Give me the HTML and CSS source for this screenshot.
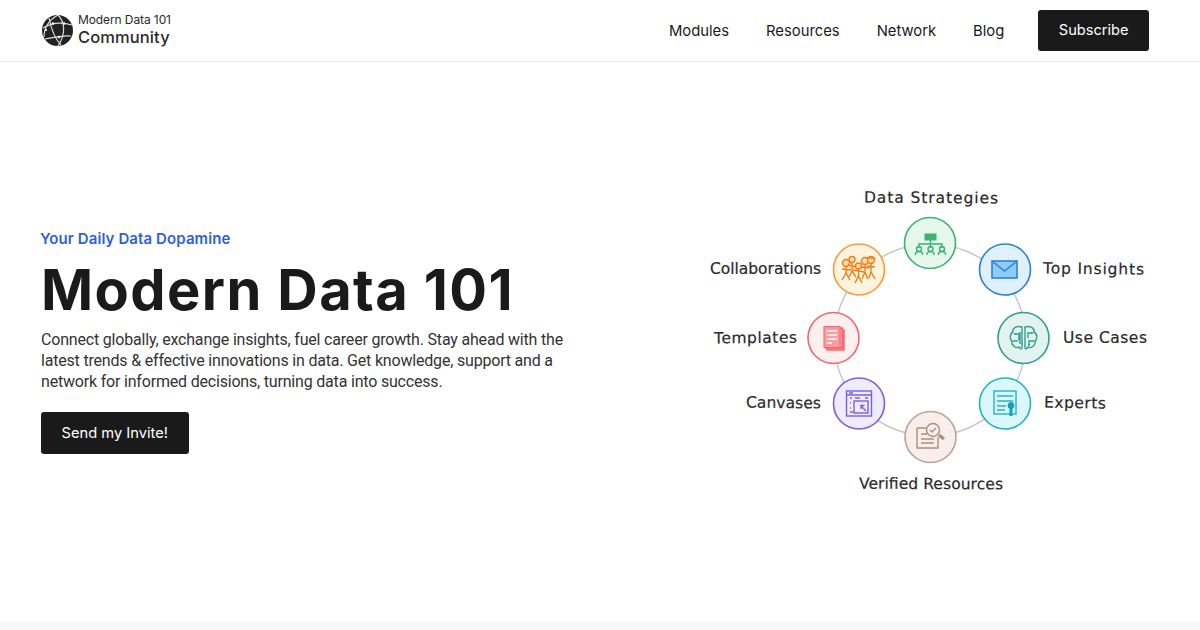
FILE: index.html
```html
<!doctype html>
<html>
<head>
    <meta charset="utf-8">
    <title>Modern Data 101 Community</title>
    <link rel="stylesheet" href="styles.css">
</head>
<body>
    <div class="container">
        <header>
            <a class="logo" href="#">
                <svg class="globe" width="33" height="33" viewBox="0 0 33 33">
                    <circle cx="16.5" cy="16.5" r="15.5" fill="#222"/>
                    <g fill="none" stroke="#ddd" stroke-width="1.2">
                        <path d="M17 1 C8 6 3 13 3 23"/>
                        <path d="M17 1 C24 8 25 20 17 32"/>
                        <path d="M2 14 C10 9 21 8 31 11"/>
                        <path d="M4 25 C12 24 21 21 30 22"/>
                        <path d="M8 4 C10 14 13 24 20 31"/>
                    </g>
                    <g fill="#fff">
                        <circle cx="12" cy="9.5" r="1.3"/>
                        <circle cx="23" cy="9.5" r="1.3"/>
                        <circle cx="18" cy="23" r="1.3"/>
                        <circle cx="5" cy="16" r="1.1"/>
                    </g>
                </svg>
                <span class="logo_text">
                    <span class="logo_top">Modern Data 101</span>
                    <span class="logo_name">Community</span>
                </span>
            </a>
            <nav>
                <a href="#">Modules</a>
                <a href="#">Resources</a>
                <a href="#">Network</a>
                <a href="#">Blog</a>
                <a class="btn" href="#">Subscribe</a>
            </nav>
        </header>
        <section class="hero">
            <div class="intro">
                <div class="kicker">Your Daily Data Dopamine</div>
                <h1>Modern Data 101</h1>
                <p>Connect globally, exchange insights, fuel career growth. Stay ahead with the latest trends &amp; effective innovations in data. Get knowledge, support and a network for informed decisions, turning data into success.</p>
                <a class="btn" href="#">Send my Invite!</a>
            </div>
            <svg class="wheel" width="460" height="320" viewBox="700 180 460 320">
                <circle class="ring" cx="930" cy="340" r="96"/>

                <g class="node green">
                    <circle cx="930" cy="243" r="25.5"/>
                    <rect class="solid" x="925" y="234" width="11" height="6"/>
                    <path d="M930.5 240 V244 M919 248 V244 H942 V248 M930.5 244 V248"/>
                    <circle class="head" cx="919" cy="249" r="2.500"/>
                    <circle class="head" cx="930.500" cy="249" r="2.500"/>
                    <circle class="head" cx="942" cy="249" r="2.500"/>
                    <path d="M915.500 255 V253 Q919 250 922.500 253 V255 M927 255 V253 Q930.500 250 934 253 V255 M938.500 255 V253 Q942 250 945.500 253 V255"/>
                </g>
                <g class="node blue">
                    <circle cx="1005" cy="269.500" r="25.500"/>
                    <rect class="solid" x="992" y="261" width="25" height="17"/>
                    <path d="M992 261 L1004.500 271 L1017 261"/>
                </g>
                <g class="node teal">
                    <circle cx="1023.500" cy="338" r="25.500"/>
                    <path d="M1022 327 C1016 325 1012 329 1013 332 C1009 334 1010 340 1012 341 C1011 345 1016 349 1019 347 Q1021 350 1022 348 Z"/>
                    <path d="M1025 327 C1031 325 1035 329 1034 332 C1038 334 1037 340 1035 341 C1036 345 1031 349 1028 347 Q1026 350 1025 348 Z"/>
                    <path d="M1015 334 H1019 V339 M1013 341 H1018 M1032 333 H1028 V338 M1034 341 H1029 V345 M1020 332 V344"/>
                    <circle class="dot" cx="1015" cy="334" r="1"/>
                    <circle class="dot" cx="1019" cy="339" r="1"/>
                    <circle class="dot" cx="1032" cy="333" r="1"/>
                    <circle class="dot" cx="1029" cy="345" r="1"/>
                </g>
                <g class="node cyan">
                    <circle cx="1005" cy="403.500" r="25.500"/>
                    <rect x="994" y="391" width="22" height="23"/>
                    <path d="M997 396 H1013 M997 401 H1013 M997 406 H1006 M997 410 H1005"/>
                    <circle class="solid" cx="1011" cy="405.500" r="3"/>
                    <path class="thick" d="M1011 408 V416"/>
                </g>
                <g class="node brown">
                    <circle cx="930.500" cy="437" r="25.500"/>
                    <path d="M917 428 H927 M938 437 V448 H917 V428"/>
                    <path d="M921 434 H927 M921 439 H934 M921 443 H934"/>
                    <circle class="lens" cx="933" cy="430" r="6.500"/>
                    <path d="M930 430 L932 432 L936 428"/>
                    <path class="thick" d="M939 435 L944 439"/>
                </g>
                <g class="node purple">
                    <circle cx="859" cy="403.500" r="25.500"/>
                    <rect x="846.500" y="391" width="25" height="25"/>
                    <path d="M846.500 395 H871.500 M849 393 H853 M850 398 H852 M855 398 H860 M865 398 H868 M850 403 H851 M850 408 H851 M850 412 H853"/>
                    <rect x="854" y="401" width="14" height="12"/>
                    <path d="M866 411 L861 406 M861 409 V405.500 H864.500"/>
                </g>
                <g class="node red">
                    <circle cx="833.500" cy="338" r="25.500"/>
                    <rect class="back" x="827" y="330" width="17" height="20"/>
                    <rect class="back" x="825.500" y="328" width="17" height="20"/>
                    <rect class="solid" x="824" y="326.500" width="16" height="21"/>
                    <path d="M827 331 H837 M827 335 H837 M827 339 H837 M827 343 H832"/>
                </g>
                <g class="node orange">
                    <circle cx="859" cy="269.500" r="25.500"/>
                    <g class="person">
                        <circle cx="846" cy="263" r="3.500"/><path d="M846 266.500 V273 M842 269 L851 270 M846 273 L842 280 M846 273 L850 280"/>
                    </g>
                    <g class="person">
                        <circle cx="852" cy="259.500" r="3"/><path d="M852 262.500 V271 M848 265 L856 267 M852 271 L849 277 M852 271 L856 277"/>
                    </g>
                    <g class="person">
                        <circle cx="858.500" cy="266" r="3"/><path d="M858.500 269 V276 M853 270 L864 272 M858.500 276 L855 283 M858.500 276 L862 283"/>
                    </g>
                    <g class="person">
                        <circle cx="865" cy="261" r="3.500"/><path d="M865 264.500 V272 M861 267 L870 268 M865 272 L862 279 M865 272 L868 279"/>
                    </g>
                    <g class="person">
                        <circle cx="871" cy="260" r="3.500"/><path d="M867 258 H875 M871 263.500 V272 M867 266 L875 267 M871 272 L869 278 M871 272 L875 279"/>
                    </g>
                </g>

                <g class="labels">
                    <text x="864" y="203" textLength="134" transform="rotate(.4 930 198)">Data Strategies</text>
                    <text x="1043" y="274" textLength="101" transform="rotate(.6 1090 270)">Top Insights</text>
                    <text x="1063" y="343" textLength="84">Use Cases</text>
                    <text x="1044" y="408" textLength="62" transform="rotate(1 1075 403)">Experts</text>
                    <text x="859" y="489" textLength="144" transform="rotate(.3 930 484)">Verified Resources</text>
                    <text x="746" y="408" textLength="75" transform="rotate(.6 783 403)">Canvases</text>
                    <text x="714" y="343" textLength="83" transform="rotate(-.6 755 338)">Templates</text>
                    <text x="710" y="274" textLength="111">Collaborations</text>
                </g>
            </svg>
        </section>
        <footer></footer>
    </div>
</body>
</html>
```

FILE: styles.css
```css
body{
    margin:0;
    color:#1a1a1a;
    background-color:#fff;
    font-family:"Roboto", sans-serif;
}
a{
    color:inherit;
    text-decoration:none;
}
.container{
    display:flex;
    flex-direction:column;
    height:630px;
    overflow:hidden;
}
header{
    display:flex;
    align-items:center;
    justify-content:space-between;
    height:61px;
    flex-shrink:0;
    padding:0 51px 0 41px;
    border-bottom:1px solid #e8e8e8;
}
.logo{
    display:flex;
    align-items:center;
    gap:4px;
}
.logo_text{
    display:flex;
    flex-direction:column;
    margin-top:-1px;
    font-family:"Inter", sans-serif;
    color:#2a2a2a;
}
.logo_top{
    font-size:12px;
    line-height:14.500px;
    letter-spacing:-0.1px;
}
.logo_name{
    font-size:16.500px;
    line-height:20px;
    font-weight:500;
    letter-spacing:0.100px;
}
nav{
    display:flex;
    align-items:center;
    gap:37px;
    font-family:"Inter", sans-serif;
    font-size:14.800px;
    font-weight:400;
}
.btn{
    display:inline-block;
    padding:0 20.500px;
    line-height:42px;
    font-family:"Inter", sans-serif;
    font-size:14.700px;
    font-weight:400;
    color:#fff;
    background-color:#1a1a1a;
    border-radius:3px;
}
nav .btn{
    margin-left:-3px;
    line-height:41px;
    font-size:14.600px;
}
.hero{
    display:flex;
    align-items:center;
    justify-content:space-between;
    flex:1;
    padding:0 40px 0 41px;
}
.intro{
    width:530px;
    margin-top:-2px;
}
.kicker{
    font-family:"Inter", sans-serif;
    font-size:15px;
    font-weight:600;
    line-height:20px;
    letter-spacing:0.100px;
    color:#2f5fdc;
    margin-left:-1px;
}
h1{
    margin:10px 0 8px;
    font-family:"Inter", sans-serif;
    font-size:56px;
    font-weight:700;
    line-height:62px;
    white-space:nowrap;
    letter-spacing:1.400px;
}
p{
    margin:0 0 20px;
    font-size:16px;
    line-height:21px;
    letter-spacing:-0.190px;
    color:#333;
}
.wheel{
    flex-shrink:0;
    margin-top:-4px;
}
.ring{
    fill:none;
    stroke:#c8c8c8;
    stroke-width:1.500;
}
.node path, .node rect, .node circle{
    fill:none;
    stroke-width:1.400;
}
.node > circle:first-child{
    stroke-width:1.600;
}
.node .solid{
    stroke-width:1;
}
.node .thick{
    stroke-width:3;
}
.person circle{
    fill:#ffd9a8;
}
.green{ stroke:#3cb371; }
.green > circle:first-child{ fill:#e6f7ec; }
.green .solid{ fill:#3cb371; }
.blue{ stroke:#2b82d4; }
.blue > circle:first-child{ fill:#dff1ff; }
.blue .solid{ fill:#8fcbf8; stroke-width:1.600; }
.teal{ stroke:#2f9e8f; }
.teal > circle:first-child{ fill:#e3f3f0; }
.teal .dot{ fill:#2f9e8f; stroke-width:0; }
.cyan{ stroke:#22b3cc; }
.cyan > circle:first-child{ fill:#dcf7fb; }
.cyan .solid, .cyan .thick{ fill:#0fa3bd; stroke:#0fa3bd; }
.brown{ stroke:#b08c7c; }
.brown > circle:first-child{ fill:#f8efec; stroke:#bfa195; }
.brown .lens{ fill:#f8efec; }
.purple{ stroke:#7a5fe0; }
.purple > circle:first-child{ fill:#f0ecff; }
.red{ stroke:#f0666c; }
.red > circle:first-child{ fill:#ffefef; }
.red .solid{ fill:#ff9c9f; }
.red .back{ fill:#ff9c9f; }
.red path{ stroke:#fff; }
.orange{ stroke:#fb9a3c; }
.orange > circle:first-child{ fill:#fff5df; }
.person{ stroke:#f57c14; }
.labels{
    font-family:"DejaVu Sans", sans-serif;
    font-size:15.500px;
    fill:#2a2a2a;
    stroke:#2a2a2a;
    stroke-width:0.200;
}
footer{
    height:8px;
    flex-shrink:0;
    background-color:#f8f8f8;
}
```
